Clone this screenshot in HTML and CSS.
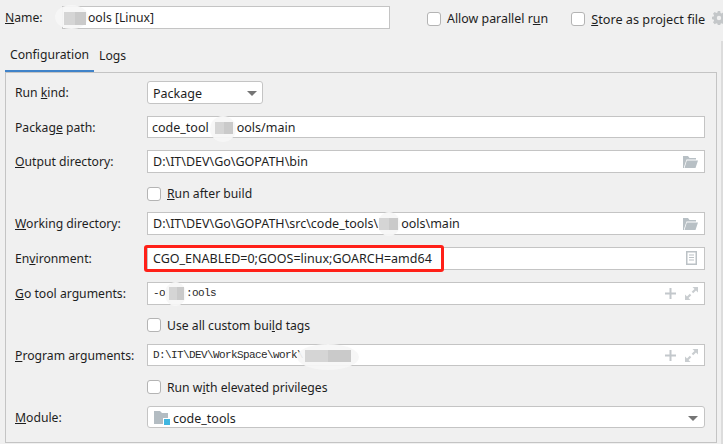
FILE: index.html
```html
<!DOCTYPE html>
<html lang="en">
<head>
<meta charset="utf-8">
<title>Run configuration</title>
<link rel="stylesheet" href="styles.css">
</head>
<body>
<div class="app">
  <div class="dialog">
    <header class="head">
      <label class="name-label"><u>N</u>ame:</label>
      <div class="field name-field"><span class="mosaic mosaic-name"></span>ools [Linux]</div>
      <label class="check check-parallel"><span class="box"></span><span>Allow parallel r<u>u</u>n</span></label>
      <label class="check check-store"><span class="box"></span><span><u>S</u>tore as project file</span></label>
      <svg class="gear" width="14" height="14" viewBox="0 0 14 14"><path fill="#c4c7c9" fill-rule="evenodd" d="M5.800 0h2.400l.3 1.900 1.200.5L11.300 1.300 13 3l-1.100 1.600.5 1.200 1.900.3v2.400l-1.900.3-.5 1.200 1.100 1.600-1.700 1.700-1.600-1.100-1.200.5-.3 1.900H5.800l-.3-1.900-1.200-.5-1.600 1.100L1 11.300l1.100-1.600-.5-1.200L-.3 8.200V5.800l1.900-.3.5-1.200L1 2.700 2.700 1l1.600 1.100 1.200-.5zM7 4.800a2.200 2.200 0 1 0 0 4.400 2.200 2.200 0 0 0 0-4.400z"/></svg>
    </header>
    <nav class="tabs">
      <span class="tab tab-active">Configuration</span>
      <span class="tab">Logs</span>
    </nav>
    <section class="panel">
      <label class="lbl">Run <u>k</u>ind:</label>
      <div class="field select select-kind"><span>Package</span><span class="arrow"></span></div>

      <label class="lbl">Packag<u>e</u> path:</label>
      <div class="field path-first">code_tool<span class="mosaic mosaic-pkg"></span>ools/main</div>

      <label class="lbl"><u>O</u>utput directory:</label>
      <div class="field">
        <span class="grow">D:\IT\DEV\Go\GOPATH\bin</span>
        <svg class="ico" width="15" height="12" viewBox="0 0 15 12"><use href="#folder"/></svg>
      </div>

      <label class="check slot2"><span class="box"></span><span><u>R</u>un after build</span></label>

      <label class="lbl"><u>W</u>orking directory:</label>
      <div class="field">
        <span class="grow">D:\IT\DEV\Go\GOPATH\src\code_tools\<span class="mosaic mosaic-work"></span>ools\main</span>
        <svg class="ico" width="15" height="12" viewBox="0 0 15 12"><use href="#folder"/></svg>
      </div>

      <label class="lbl">En<u>v</u>ironment:</label>
      <div class="field env">
        <span class="grow">CGO_ENABLED=0;GOOS=linux;GOARCH=amd64</span>
        <svg class="ico ico-doc" width="11" height="14" viewBox="0 0 11 14"><path fill="#bcc2c6" fill-rule="evenodd" d="M0 0h11v14H0zM1.500 1.500v11h8v-11zM3 3.500h5v1H3zM3 6h5v1H3zM3 8.500h5v1H3z"/></svg>
        <span class="redbox"></span>
      </div>

      <label class="lbl"><u>G</u>o tool arguments:</label>
      <div class="field">
        <span class="grow mono">-o<span class="mosaic mosaic-go"></span>:ools</span>
        <svg class="ico ico-plus" width="11" height="11" viewBox="0 0 11 11"><use href="#plus"/></svg>
        <svg class="ico ico-exp" width="13" height="13" viewBox="0 0 13 13"><use href="#expand"/></svg>
      </div>

      <label class="check slot2"><span class="box"></span><span>Use all custom bui<u>l</u>d tags</span></label>

      <label class="lbl"><u>P</u>rogram arguments:</label>
      <div class="field">
        <span class="grow mono">D:\IT\DEV\WorkSpace\work\<span class="mosaic mosaic-prog"></span></span>
        <svg class="ico ico-plus" width="11" height="11" viewBox="0 0 11 11"><use href="#plus"/></svg>
        <svg class="ico ico-exp" width="13" height="13" viewBox="0 0 13 13"><use href="#expand"/></svg>
      </div>

      <label class="check slot2"><span class="box"></span><span>Run w<u>i</u>th elevated privileges</span></label>

      <label class="lbl"><u>M</u>odule:</label>
      <div class="field select">
        <svg class="mod" width="16" height="14" viewBox="0 0 16 14"><path fill="#b3bcc2" d="M0 0h6l2 2h6v5H9v6H0z"/><path fill="#40b6e0" d="M10 8h6v6h-6z"/></svg>
        <span class="grow">code_tools</span>
        <span class="arrow arrow-mod"></span>
      </div>
    </section>
  </div>
  <div class="rail"></div>
</div>
<svg class="defs" width="0" height="0">
  <defs>
    <path id="folder" fill="#b8c0c5" d="M0 0h5l1.500 2H13v1.500H3.500L1 11V12H0zM3.800 4.500H15L12.500 12H1.500z"/>
    <path id="plus" fill="#c3c8cc" d="M4.500 0h2v4.500H11v2H6.500V11h-2V6.500H0v-2h4.500z"/>
    <path id="expand" fill="#c9cdd0" d="M7.500 0H13v5.500l-2-2-2.800 2.800-1.500-1.500L9.500 2zM0 7.500l2 2 2.800-2.800 1.500 1.500L3.500 11l2 2H0z"/>
  </defs>
</svg>
</body>
</html>
```
FILE: styles.css
```css
* { box-sizing: border-box; }

html, body {
  margin: 0;
  height: 444px;
  overflow: hidden;
  background: #f0f0f0;
}

body {
  font-family: "Noto Sans", "Open Sans", sans-serif;
  font-size: 12.2px;
  color: #1e1e1e;
}

.app { display: flex; height: 444px; }

.dialog {
  width: 717px;
  flex: none;
  padding-left: 5px;
  height: 443px;
  display: flex;
  flex-direction: column;
}

.rail {
  width: 2px;
  margin: 41px 0 0 4px;
  background: #dcdcdc;
}

.defs { position: absolute; }

.head {
  display: flex;
  align-items: center;
  height: 23px;
  margin-top: 6px;
}

.name-label { width: 57px; flex: none; }

.field {
  display: flex;
  align-items: center;
  height: 22.8px;
  background: #fff;
  border: 1px solid #c4c4c4;
  padding: 0 6px 0 5px;
  white-space: nowrap;
  min-width: 0;
  font-size: 12.5px;
}

.name-field {
  display: block;
  line-height: 21px;
  width: 328px;
  flex: none;
  height: 23px;
  padding-left: 0;
  font-size: 12.2px;
}

.path-first { padding-left: 4px; display: block; line-height: 21px; }

.grow { flex: 1; min-width: 0; }

.check { display: flex; align-items: center; gap: 6px; white-space: nowrap; }

.check-parallel { margin-left: 37px; padding-top: 2px; font-size: 12.4px; }
.check-store { margin-left: 23px; padding-top: 2px; font-size: 12.7px; }

.box {
  width: 14px;
  height: 14px;
  flex: none;
  background: #fff;
  border: 1px solid #b4b4b4;
  border-radius: 3px;
}

.gear { margin-left: 7px; flex: none; }

.tabs {
  display: flex;
  height: 45px;
  margin-top: -1px;
}

.tab {
  display: flex;
  align-items: center;
  padding: 10px 5px 0;
  height: 45px;
}

.tab-active { border-bottom: 3px solid #4083c9; }

.panel {
  flex: 1;
  margin-top: -1px;
  border: 1px solid #c4c4c4;
  padding: 8px 11px 0 9px;
  display: grid;
  grid-template-columns: 132px 1fr;
  grid-auto-rows: min-content;
  row-gap: 11.9px;
  align-items: center;
}

.slot2 { grid-column: 2; height: 15.4px; padding-top: 2px; }

.select { border-radius: 3px; justify-content: space-between; padding-top: 2px; }
.select-kind { width: 116px; }

.arrow {
  flex: none;
  width: 0;
  height: 0;
  border-left: 5px solid transparent;
  border-right: 5px solid transparent;
  border-top: 5px solid #757575;
  margin-right: -1px;
}

.arrow-mod { margin-right: 0; }

.mod { flex: none; margin: 0 3px 0 1px; }

.mono {
  font-family: "Liberation Mono", monospace;
  font-size: 11px;
  letter-spacing: -0.6px;
  color: #2a2a2a;
}

.env { position: relative; }

.redbox {
  position: absolute;
  left: -4px;
  top: -3px;
  width: 300px;
  height: 27px;
  border: 3px solid #ff2018;
  border-radius: 3px;
}

.ico { flex: none; display: block; }
.ico-doc { margin-right: 1px; }
.ico-plus { margin-right: 9px; }

.mosaic {
  display: inline-block;
  position: relative;
  height: 1px;
}

.mosaic::before {
  content: "";
  position: absolute;
  background: rgba(246, 246, 246, 0.92);
  border-radius: 50%;
}

.mosaic::after {
  content: "";
  position: absolute;
  background: linear-gradient(90deg, #d5d5d5 50%, #cacaca 50%);
}

.mosaic-name { width: 25px; }
.mosaic-name::before { left: -8px; top: -16px; width: 33px; height: 24px; }
.mosaic-name::after { left: 1px; top: -9px; width: 22px; height: 13px; }

.mosaic-pkg { width: 28px; }
.mosaic-pkg::before { left: 1px; top: -15px; width: 26px; height: 26px; }
.mosaic-pkg::after { left: 6px; top: -9px; width: 18px; height: 12px; }

.mosaic-work { width: 23px; }
.mosaic-work::before { left: 0; top: -15px; width: 22px; height: 24px; }
.mosaic-work::after { left: 1px; top: -9px; width: 19px; height: 12px; }

.mosaic-go { width: 21px; }
.mosaic-go::before { left: 0; top: -13px; width: 21px; height: 24px; }
.mosaic-go::after { left: 4px; top: -8px; width: 15px; height: 13px; }

.mosaic-prog { width: 54px; }
.mosaic-prog::before { left: -6px; top: -13px; width: 62px; height: 26px; }
.mosaic-prog::after { left: 2px; top: -7px; width: 46px; height: 12px; }
```
